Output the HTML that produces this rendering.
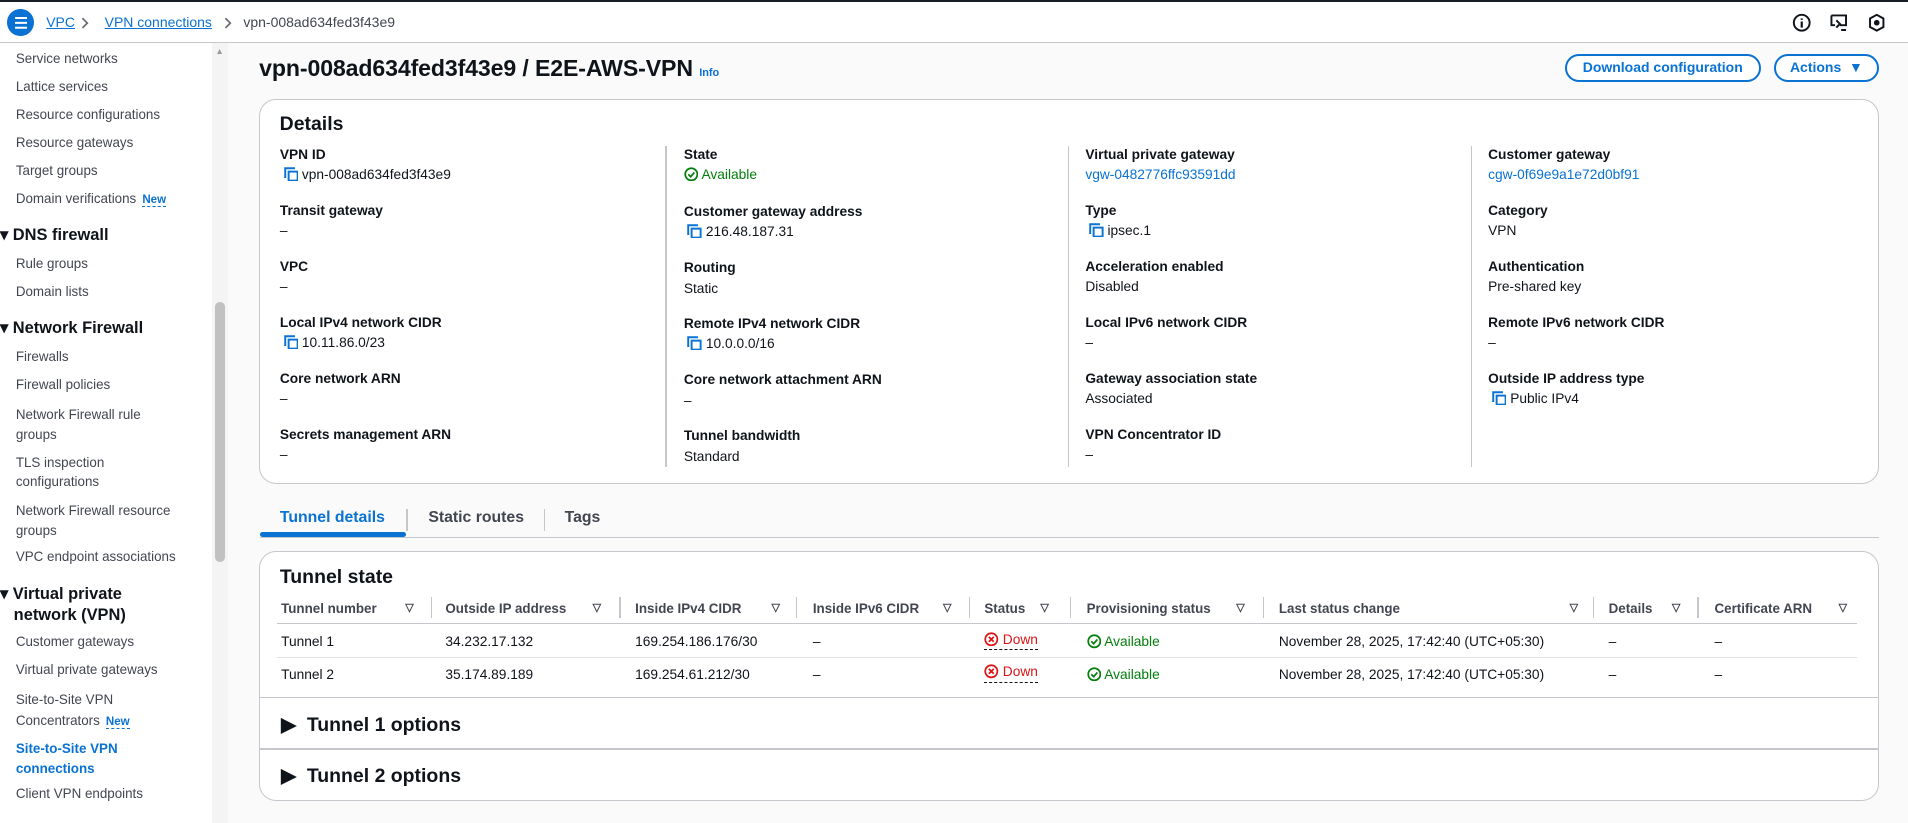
<!DOCTYPE html>
<html><head><meta charset="utf-8">
<style>
html{zoom:1.2168}
*{box-sizing:border-box;margin:0;padding:0}
body{width:1568px;height:676px;overflow:hidden;background:#fafafa;font-family:"Liberation Sans",sans-serif;color:#0f141a;position:relative;font-size:11.5px}
.a{position:absolute;white-space:nowrap}
.top{position:absolute;left:0;top:0;width:1568px;height:35px;background:#fff;border-top:2px solid #161d26;border-bottom:1px solid #c6c6cd}
.side{position:absolute;left:0;top:35px;width:187px;height:641px;background:#fff;border-right:1px solid #c6c6cd}
.side .a{left:13px;font-size:11px;color:#424650}
.side .h{font-size:13.5px;font-weight:bold;color:#0f141a}
.new{color:#0972d3;font-weight:bold;font-size:9.5px;border-bottom:1px dashed #0972d3;margin-left:5px}
.card{position:absolute;background:#fff;border:1px solid #c6c6cd;border-radius:14px}
.lb{font-weight:bold;font-size:11.3px;color:#0f141a}
.v{font-size:11.3px}
.blue{color:#0972d3}
.btn{position:absolute;height:23px;border:2px solid #0972d3;border-radius:14px;color:#0972d3;font-weight:bold;font-size:11.5px;text-align:center;line-height:19px;background:#fff}
.div{position:absolute;width:1px;background:#c6c6cd}
.th{font-weight:bold;font-size:11px;color:#424650}
.fi{font-size:9px;color:#424650;font-weight:bold}
.hl{position:absolute;height:1px;background:#e0e0e4}
</style></head><body>
<div class="top">
  <div class="a" style="left:6px;top:6px;width:22px;height:22px;border-radius:50%;background:#0972d3"></div>
  <div class="a" style="left:12px;top:12px;width:10px;height:2px;background:#fff;box-shadow:0 4px 0 #fff,0 8px 0 #fff"></div>
  <div class="a blue" style="left:38px;top:10px;font-size:11.5px;text-decoration:underline">VPC</div>
  <svg class="a" style="left:66px;top:12px" width="8" height="10" viewBox="0 0 8 10"><path d="M2 1l4 4-4 4" fill="none" stroke="#656871" stroke-width="1.4"/></svg>
  <div class="a blue" style="left:86px;top:10px;font-size:11.5px;text-decoration:underline">VPN connections</div>
  <svg class="a" style="left:183px;top:12px" width="8" height="10" viewBox="0 0 8 10"><path d="M2 1l4 4-4 4" fill="none" stroke="#656871" stroke-width="1.4"/></svg>
  <div class="a" style="left:200px;top:10px;font-size:11.5px;color:#424650">vpn-008ad634fed3f43e9</div>
  <svg class="a" style="left:1473px;top:9px" width="16" height="16" viewBox="0 0 16 16"><circle cx="8" cy="8" r="6.5" fill="none" stroke="#0f141a" stroke-width="1.6"/><path d="M8 7v5M8 4.5v1.2" stroke="#0f141a" stroke-width="1.8"/></svg>
  <svg class="a" style="left:1503px;top:9px" width="16" height="16" viewBox="0 0 16 16"><path d="M2 2h12v8H9M2 2v8h3M6 6l3 3-3 3M10 14h4" fill="none" stroke="#0f141a" stroke-width="1.6"/></svg>
  <svg class="a" style="left:1534px;top:9px" width="16" height="16" viewBox="0 0 16 16"><path d="M8 1.5l5.5 3v7L8 14.5 2.5 11.5v-7z" fill="none" stroke="#0f141a" stroke-width="1.6"/><circle cx="8" cy="8" r="2.3" fill="#0f141a"/></svg>
</div>
<div class="side">
  <div class="a" style="top:7px">Service networks</div>
  <div class="a" style="top:30px">Lattice services</div>
  <div class="a" style="top:53px">Resource configurations</div>
  <div class="a" style="top:76px">Resource gateways</div>
  <div class="a" style="top:99px">Target groups</div>
  <div class="a" style="top:122px">Domain verifications<span class="new">New</span></div>
  <div class="a h" style="top:150px;left:0">▾ DNS firewall</div>
  <div class="a" style="top:175px">Rule groups</div>
  <div class="a" style="top:198px">Domain lists</div>
  <div class="a h" style="top:226px;left:0">▾ Network Firewall</div>
  <div class="a" style="top:252px">Firewalls</div>
  <div class="a" style="top:275px">Firewall policies</div>
  <div class="a" style="top:298px;line-height:16px">Network Firewall rule<br>groups</div>
  <div class="a" style="top:337px;line-height:16px">TLS inspection<br>configurations</div>
  <div class="a" style="top:377px;line-height:16px">Network Firewall resource<br>groups</div>
  <div class="a" style="top:416px">VPC endpoint associations</div>
  <div class="a h" style="top:445px;left:0;line-height:17px">▾ Virtual private<br>&nbsp;&nbsp;&nbsp;network (VPN)</div>
  <div class="a" style="top:486px">Customer gateways</div>
  <div class="a" style="top:509px">Virtual private gateways</div>
  <div class="a" style="top:532px;line-height:17px">Site-to-Site VPN<br>Concentrators<span class="new">New</span></div>
  <div class="a" style="top:572px;line-height:17px;color:#0972d3;font-weight:bold">Site-to-Site VPN<br>connections</div>
  <div class="a" style="top:611px">Client VPN endpoints</div>
  <div class="a" style="left:174px;top:0;width:13px;height:641px;background:#f4f4f4"></div>
  <div class="a" style="left:177px;top:213px;width:8px;height:214px;background:#c1c1c1;border-radius:4px"></div>
  <div class="a" style="left:177px;top:3px;font-size:7px;color:#999">▲</div>
</div>

<div class="a" style="left:213px;top:45px;font-size:19px;font-weight:bold;color:#0f141a;letter-spacing:-0.1px">vpn-008ad634fed3f43e9 / E2E-AWS-VPN <span style="font-size:9px;color:#0972d3;letter-spacing:0">Info</span></div>
<div class="btn" style="left:1286px;top:44px;width:161px">Download configuration</div>
<div class="btn" style="left:1458px;top:44px;width:86px">Actions&nbsp;&nbsp;▼</div>

<div class="card" style="left:213px;top:81px;width:1331px;height:317px">
  <div class="a" style="left:16px;top:11px;font-size:16px;font-weight:bold">Details</div>
  <div class="div" style="left:333px;top:38px;height:264px"></div>
  <div class="div" style="left:664px;top:38px;height:264px"></div>
  <div class="div" style="left:995px;top:38px;height:264px"></div>
</div>

<div class="a" style="left:230px;top:418px;font-size:13px;font-weight:bold;color:#0972d3">Tunnel details</div>
<div class="a" style="left:214px;top:437px;width:120px;height:4px;background:#0972d3;border-radius:2px"></div>
<div class="a" style="left:334px;top:418px;width:1px;height:18px;background:#c6c6cd"></div>
<div class="a" style="left:352px;top:418px;font-size:13px;font-weight:bold;color:#424650">Static routes</div>
<div class="a" style="left:447px;top:418px;width:1px;height:18px;background:#c6c6cd"></div>
<div class="a" style="left:464px;top:418px;font-size:13px;font-weight:bold;color:#424650">Tags</div>
<div class="a" style="left:214px;top:441px;width:1330px;height:1px;background:#c6c6cd"></div>

<div class="card" style="left:213px;top:453px;width:1331px;height:205px"></div>
<div class="a" style="left:230px;top:465px;font-size:16px;font-weight:bold">Tunnel state</div>
<div class="hl" style="left:214px;top:573px;width:1329px;background:#c6c6cd"></div>
<div class="a" style="left:231px;top:586px;font-size:16px;font-weight:bold">▶&nbsp; Tunnel 1 options</div>
<div class="hl" style="left:214px;top:615px;width:1329px;background:#c6c6cd"></div>
<div class="a" style="left:231px;top:628px;font-size:16px;font-weight:bold">▶&nbsp; Tunnel 2 options</div>

<div class="a lb" style="left:230px;top:121px">VPN ID</div>
<div class="a v" style="left:233px;top:137px"><svg width="12" height="12" viewBox="0 0 12 12" style="vertical-align:-2px"><path d="M1 9V1h8" fill="none" stroke="#0972d3" stroke-width="1.6"/><rect x="3.8" y="3.8" width="7.4" height="7.4" fill="none" stroke="#0972d3" stroke-width="1.6"/></svg> vpn-008ad634fed3f43e9</div>
<div class="a lb" style="left:230px;top:167px">Transit gateway</div><div class="a v" style="left:230px;top:183px">–</div>
<div class="a lb" style="left:230px;top:213px">VPC</div><div class="a v" style="left:230px;top:229px">–</div>
<div class="a lb" style="left:230px;top:259px">Local IPv4 network CIDR</div>
<div class="a v" style="left:233px;top:275px"><svg width="12" height="12" viewBox="0 0 12 12" style="vertical-align:-2px"><path d="M1 9V1h8" fill="none" stroke="#0972d3" stroke-width="1.6"/><rect x="3.8" y="3.8" width="7.4" height="7.4" fill="none" stroke="#0972d3" stroke-width="1.6"/></svg> 10.11.86.0/23</div>
<div class="a lb" style="left:230px;top:305px">Core network ARN</div><div class="a v" style="left:230px;top:321px">–</div>
<div class="a lb" style="left:230px;top:351px">Secrets management ARN</div><div class="a v" style="left:230px;top:367px">–</div>

<div class="a lb" style="left:562px;top:121px">State</div>
<div class="a v" style="left:562px;top:137px;color:#037f0c"><svg width="12" height="12" viewBox="0 0 12 12" style="vertical-align:-2px"><circle cx="6" cy="6" r="5" fill="none" stroke="#037f0c" stroke-width="1.4"/><path d="M3.5 6l2 2 3-3.5" fill="none" stroke="#037f0c" stroke-width="1.4"/></svg> Available</div>
<div class="a lb" style="left:562px;top:168px">Customer gateway address</div>
<div class="a v" style="left:565px;top:184px"><svg width="12" height="12" viewBox="0 0 12 12" style="vertical-align:-2px"><path d="M1 9V1h8" fill="none" stroke="#0972d3" stroke-width="1.6"/><rect x="3.8" y="3.8" width="7.4" height="7.4" fill="none" stroke="#0972d3" stroke-width="1.6"/></svg> 216.48.187.31</div>
<div class="a lb" style="left:562px;top:214px">Routing</div><div class="a v" style="left:562px;top:231px">Static</div>
<div class="a lb" style="left:562px;top:260px">Remote IPv4 network CIDR</div>
<div class="a v" style="left:565px;top:276px"><svg width="12" height="12" viewBox="0 0 12 12" style="vertical-align:-2px"><path d="M1 9V1h8" fill="none" stroke="#0972d3" stroke-width="1.6"/><rect x="3.8" y="3.8" width="7.4" height="7.4" fill="none" stroke="#0972d3" stroke-width="1.6"/></svg> 10.0.0.0/16</div>
<div class="a lb" style="left:562px;top:306px">Core network attachment ARN</div><div class="a v" style="left:562px;top:323px">–</div>
<div class="a lb" style="left:562px;top:352px">Tunnel bandwidth</div><div class="a v" style="left:562px;top:369px">Standard</div>

<div class="a lb" style="left:892px;top:121px">Virtual private gateway</div><div class="a v blue" style="left:892px;top:137px">vgw-0482776ffc93591dd</div>
<div class="a lb" style="left:892px;top:167px">Type</div>
<div class="a v" style="left:895px;top:183px"><svg width="12" height="12" viewBox="0 0 12 12" style="vertical-align:-2px"><path d="M1 9V1h8" fill="none" stroke="#0972d3" stroke-width="1.6"/><rect x="3.8" y="3.8" width="7.4" height="7.4" fill="none" stroke="#0972d3" stroke-width="1.6"/></svg> ipsec.1</div>
<div class="a lb" style="left:892px;top:213px">Acceleration enabled</div><div class="a v" style="left:892px;top:229px">Disabled</div>
<div class="a lb" style="left:892px;top:259px">Local IPv6 network CIDR</div><div class="a v" style="left:892px;top:275px">–</div>
<div class="a lb" style="left:892px;top:305px">Gateway association state</div><div class="a v" style="left:892px;top:321px">Associated</div>
<div class="a lb" style="left:892px;top:351px">VPN Concentrator ID</div><div class="a v" style="left:892px;top:367px">–</div>

<div class="a lb" style="left:1223px;top:121px">Customer gateway</div><div class="a v blue" style="left:1223px;top:137px">cgw-0f69e9a1e72d0bf91</div>
<div class="a lb" style="left:1223px;top:167px">Category</div><div class="a v" style="left:1223px;top:183px">VPN</div>
<div class="a lb" style="left:1223px;top:213px">Authentication</div><div class="a v" style="left:1223px;top:229px">Pre-shared key</div>
<div class="a lb" style="left:1223px;top:259px">Remote IPv6 network CIDR</div><div class="a v" style="left:1223px;top:275px">–</div>
<div class="a lb" style="left:1223px;top:305px">Outside IP address type</div>
<div class="a v" style="left:1226px;top:321px"><svg width="12" height="12" viewBox="0 0 12 12" style="vertical-align:-2px"><path d="M1 9V1h8" fill="none" stroke="#0972d3" stroke-width="1.6"/><rect x="3.8" y="3.8" width="7.4" height="7.4" fill="none" stroke="#0972d3" stroke-width="1.6"/></svg> Public IPv4</div>

<div class="a th" style="left:231px;top:494px">Tunnel number</div><div class="a fi" style="left:333px;top:494px">▽</div><div class="a" style="left:354px;top:491px;width:1px;height:17px;background:#c6c6cd"></div>
<div class="a th" style="left:366px;top:494px">Outside IP address</div><div class="a fi" style="left:487px;top:494px">▽</div><div class="a" style="left:509px;top:491px;width:1px;height:17px;background:#c6c6cd"></div>
<div class="a th" style="left:522px;top:494px">Inside IPv4 CIDR</div><div class="a fi" style="left:634px;top:494px">▽</div><div class="a" style="left:654px;top:491px;width:1px;height:17px;background:#c6c6cd"></div>
<div class="a th" style="left:668px;top:494px">Inside IPv6 CIDR</div><div class="a fi" style="left:775px;top:494px">▽</div><div class="a" style="left:796px;top:491px;width:1px;height:17px;background:#c6c6cd"></div>
<div class="a th" style="left:809px;top:494px">Status</div><div class="a fi" style="left:855px;top:494px">▽</div><div class="a" style="left:879px;top:491px;width:1px;height:17px;background:#c6c6cd"></div>
<div class="a th" style="left:893px;top:494px">Provisioning status</div><div class="a fi" style="left:1016px;top:494px">▽</div><div class="a" style="left:1038px;top:491px;width:1px;height:17px;background:#c6c6cd"></div>
<div class="a th" style="left:1051px;top:494px">Last status change</div><div class="a fi" style="left:1290px;top:494px">▽</div><div class="a" style="left:1309px;top:491px;width:1px;height:17px;background:#c6c6cd"></div>
<div class="a th" style="left:1322px;top:494px">Details</div><div class="a fi" style="left:1374px;top:494px">▽</div><div class="a" style="left:1395px;top:491px;width:1px;height:17px;background:#c6c6cd"></div>
<div class="a th" style="left:1409px;top:494px">Certificate ARN</div><div class="a fi" style="left:1511px;top:494px">▽</div>
<div class="hl" style="left:228px;top:512px;width:1298px;background:#c6c6cd"></div>
<div class="hl" style="left:228px;top:540px;width:1298px"></div>

<div class="a v" style="left:231px;top:521px">Tunnel 1</div>
<div class="a v" style="left:366px;top:521px">34.232.17.132</div>
<div class="a v" style="left:522px;top:521px">169.254.186.176/30</div>
<div class="a v" style="left:668px;top:521px">–</div>
<div class="a v" style="left:809px;top:519px;color:#d91515;border-bottom:1px dashed #0f141a;padding-bottom:2px"><svg width="12" height="12" viewBox="0 0 12 12" style="vertical-align:-2px"><circle cx="6" cy="6" r="5" fill="none" stroke="#d91515" stroke-width="1.4"/><path d="M4 4l4 4M8 4l-4 4" stroke="#d91515" stroke-width="1.4"/></svg> Down</div>
<div class="a v" style="left:893px;top:521px;color:#037f0c"><svg width="12" height="12" viewBox="0 0 12 12" style="vertical-align:-2px"><circle cx="6" cy="6" r="5" fill="none" stroke="#037f0c" stroke-width="1.4"/><path d="M3.5 6l2 2 3-3.5" fill="none" stroke="#037f0c" stroke-width="1.4"/></svg> Available</div>
<div class="a v" style="left:1051px;top:521px">November 28, 2025, 17:42:40 (UTC+05:30)</div>
<div class="a v" style="left:1322px;top:521px">–</div>
<div class="a v" style="left:1409px;top:521px">–</div>

<div class="a v" style="left:231px;top:548px">Tunnel 2</div>
<div class="a v" style="left:366px;top:548px">35.174.89.189</div>
<div class="a v" style="left:522px;top:548px">169.254.61.212/30</div>
<div class="a v" style="left:668px;top:548px">–</div>
<div class="a v" style="left:809px;top:546px;color:#d91515;border-bottom:1px dashed #0f141a;padding-bottom:2px"><svg width="12" height="12" viewBox="0 0 12 12" style="vertical-align:-2px"><circle cx="6" cy="6" r="5" fill="none" stroke="#d91515" stroke-width="1.4"/><path d="M4 4l4 4M8 4l-4 4" stroke="#d91515" stroke-width="1.4"/></svg> Down</div>
<div class="a v" style="left:893px;top:548px;color:#037f0c"><svg width="12" height="12" viewBox="0 0 12 12" style="vertical-align:-2px"><circle cx="6" cy="6" r="5" fill="none" stroke="#037f0c" stroke-width="1.4"/><path d="M3.5 6l2 2 3-3.5" fill="none" stroke="#037f0c" stroke-width="1.4"/></svg> Available</div>
<div class="a v" style="left:1051px;top:548px">November 28, 2025, 17:42:40 (UTC+05:30)</div>
<div class="a v" style="left:1322px;top:548px">–</div>
<div class="a v" style="left:1409px;top:548px">–</div>
</body></html>
